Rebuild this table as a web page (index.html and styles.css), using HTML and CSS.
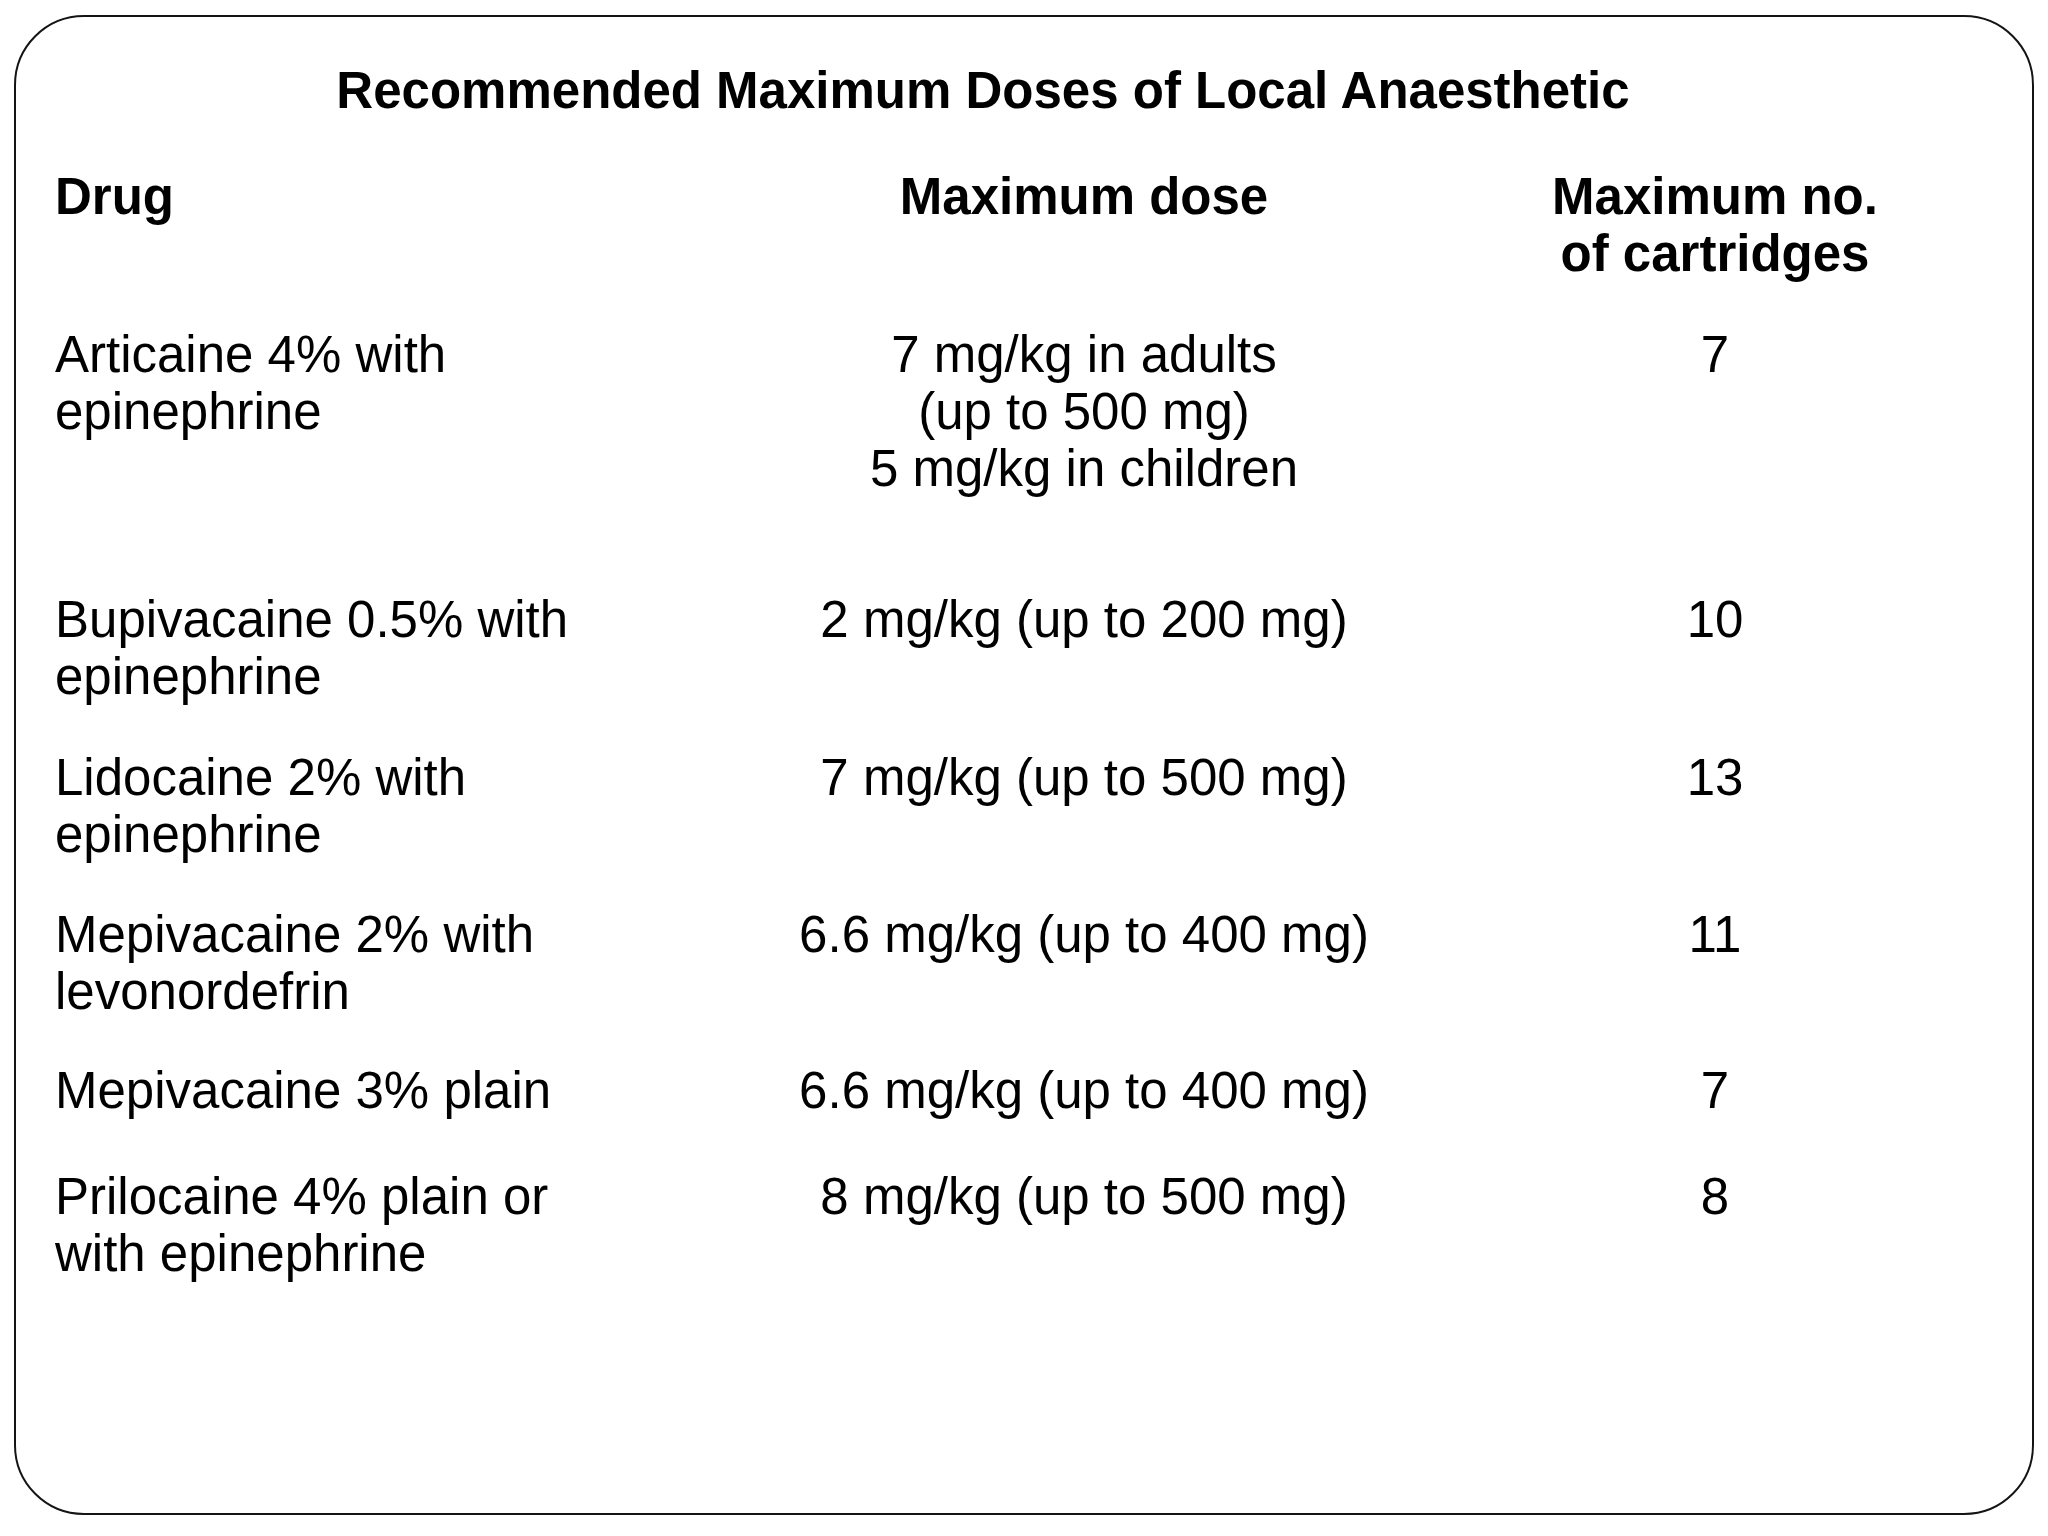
FILE: index.html
```html
<!DOCTYPE html>
<html lang="en">
<head>
<meta charset="utf-8">
<title>Recommended Maximum Doses of Local Anaesthetic</title>
<link rel="stylesheet" href="styles.css">
</head>
<body>
<div class="card">
  <h1 class="title">Recommended Maximum Doses of Local Anaesthetic</h1>
  <div class="doses">
    <div class="cell head drug">Drug</div>
    <div class="cell head center">Maximum dose</div>
    <div class="cell head center">Maximum no.<br>of cartridges</div>

    <div class="cell drug">Articaine 4% with<br>epinephrine</div>
    <div class="cell center">7 mg/kg in adults<br>(up to 500 mg)<br>5 mg/kg in children</div>
    <div class="cell center">7</div>

    <div class="cell drug">Bupivacaine 0.5% with<br>epinephrine</div>
    <div class="cell center">2 mg/kg (up to 200 mg)</div>
    <div class="cell center">10</div>

    <div class="cell drug">Lidocaine 2% with<br>epinephrine</div>
    <div class="cell center">7 mg/kg (up to 500 mg)</div>
    <div class="cell center">13</div>

    <div class="cell drug">Mepivacaine 2% with<br>levonordefrin</div>
    <div class="cell center">6.6 mg/kg (up to 400 mg)</div>
    <div class="cell center">11</div>

    <div class="cell drug">Mepivacaine 3% plain</div>
    <div class="cell center">6.6 mg/kg (up to 400 mg)</div>
    <div class="cell center">7</div>

    <div class="cell drug">Prilocaine 4% plain or<br>with epinephrine</div>
    <div class="cell center">8 mg/kg (up to 500 mg)</div>
    <div class="cell center">8</div>
  </div>
</div>
</body>
</html>
```

FILE: styles.css
```css
html, body {
  margin: 0;
  padding: 0;
  background: #ffffff;
}

body {
  font-family: "Liberation Sans", Arial, sans-serif;
  color: #000000;
  width: 2048px;
  height: 1536px;
  overflow: hidden;
}

.card {
  box-sizing: border-box;
  margin: 15px 0 0 14px;
  width: 2020px;
  height: 1500px;
  border: 2px solid #141414;
  border-radius: 70px;
  background: #ffffff;
}

.title {
  margin: 45px 0 0 0;
  padding-right: 82px;
  font-size: 51px;
  line-height: 57px;
  font-weight: bold;
  text-align: center;
}

.doses {
  display: grid;
  margin-top: 49px;
  grid-template-columns: 700px 658px 604px;
  column-gap: 0;
  grid-template-rows: 158px 265px 158px 157px 156px 106px auto;
  padding-left: 39px;
}

.cell {
  font-size: 51px;
  line-height: 57px;
  white-space: nowrap;
}

.head {
  font-weight: bold;
}

.center {
  text-align: center;
}
```
